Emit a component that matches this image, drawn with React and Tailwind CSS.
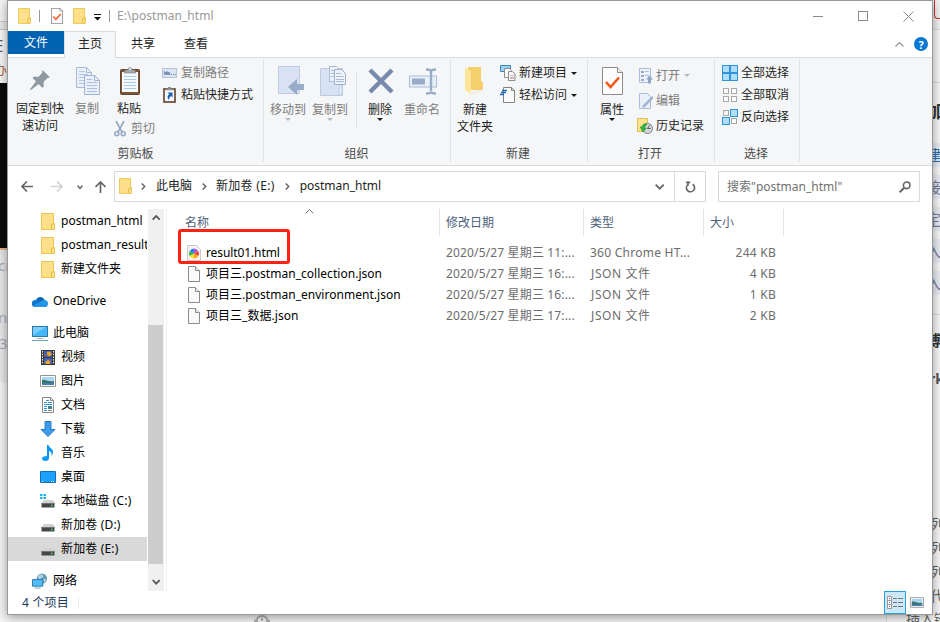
import React from "react";

const Folder = ({ w = 14, h = 17 }) => (
  <svg width={w} height={h} viewBox="0 0 14 17" className="shrink-0">
    <path d="M0.5 0.5h12v10h1v6h-13z" fill="#ffe08a" stroke="#eac54f" />
    <path d="M10.5 16.5v-5.5h3" fill="none" stroke="#e3b93c" />
  </svg>
);

const Check = ({ w, h }) => (
  <svg width={w} height={h} viewBox="0 0 21 28" className="shrink-0">
    <path d="M.5 .5h15l5 5v22H.5z" fill="#fdfdfd" stroke="#8c8c8c" strokeWidth={w < 20 ? 1.8 : 1} />
    <path d="M15.5 .5v5h5" fill="#eee" stroke="#8c8c8c" />
    <path d="M4 15l4.5 5L17 10.500" fill="none" stroke="#f4591c" strokeWidth="2.6" />
  </svg>
);

const Caret = ({ light }) => (
  <svg width="6" height="3" viewBox="0 0 6 3" className="shrink-0">
    <path d="M0 0h6L3 3z" fill={light ? "#b5b8bb" : "#1a1a1a"} />
  </svg>
);

const Pin = () => (
  <svg width="20" height="20" viewBox="0 0 20 20">
    <path d="M12.500 0l7.500 7.300-2.500.8-4 4 .3 4.200-1.500 1.400L2.500 8l1.500-1.500 4.300.4 3.700-3.900z" fill="#8d99a1" />
    <path d="M6.200 11l2.800 2.800L1 20l-1-.8z" fill="#8d99a1" />
  </svg>
);

const Copy = () => (
  <svg width="24" height="28" viewBox="0 0 24 28">
    <path d="M.5 .5h10l5 5v15H.5z" fill="#eaf0f9" stroke="#a9bbd8" />
    <path d="M10.500 .5v5h5" fill="none" stroke="#a9bbd8" />
    <path d="M3 4.500h6M3 7.500h9M3 10.500h9M3 13.500h9M3 16.500h9" stroke="#b5c6e0" />
    <path d="M8.500 8.500h10l5 5v14h-15z" fill="#eaf0f9" stroke="#a0b4d4" />
    <path d="M18.500 8.500v5h5" fill="none" stroke="#a0b4d4" />
    <path d="M11 12.500h5M11 15.500h10M11 18.500h10M11 21.500h10M11 24.500h10" stroke="#adbfdb" />
  </svg>
);

const Paste = () => (
  <svg width="20" height="29" viewBox="0 0 20 29">
    <rect x=".5" y="3.500" width="19" height="25" rx="1" fill="#7c563b" stroke="#66452e" />
    <rect x="2" y="6" width="16" height="20" fill="#f7fafd" />
    <path d="M4 10.500h12M4 13.500h12M4 16.500h12M4 19.500h12M4 22.500h12" stroke="#a9cbe6" />
    <path d="M4 7l1.500-3H8a2 2.500 0 014 0h2.500L16 7z" fill="#a5a9ad" stroke="#85898d" strokeWidth=".7" />
    <circle cx="10" cy="3" r="1" fill="#f4f5f7" />
  </svg>
);

const Scissors = () => (
  <svg width="12" height="16" viewBox="0 0 12 16" fill="none" stroke="#94a6c4">
    <path d="M2 0l6 11M10 0L4 11" strokeWidth="1.600" />
    <circle cx="2.800" cy="12.800" r="2" strokeWidth="1.500" />
    <circle cx="9.200" cy="12.800" r="2" strokeWidth="1.500" />
  </svg>
);

const PathIcon = () => (
  <svg width="15" height="10" viewBox="0 0 15 10">
    <rect x=".5" y=".5" width="14" height="9" fill="#dce6f3" stroke="#b3c3dc" />
    <path d="M2 3l1 4 1-3 1 3M5 3l1 4 1-3 1 3M9 6.500h1M11 6.500h1M13 6.500h1" fill="none" stroke="#6f88b1" />
  </svg>
);

const ShortcutPaste = () => (
  <svg width="13" height="16" viewBox="0 0 13 16" className="ml-px">
    <rect x="1" y="2" width="11" height="13" fill="#f5f9ff" stroke="#6a4b36" strokeWidth="1.700" />
    <path d="M3 2.500h7M5 .8h3" stroke="#8d9195" strokeWidth="1.600" />
    <path d="M4.500 5.500h5v5L8 9C6.500 10 6.200 11 6 13 3.800 10.500 4.500 8.500 6.300 7.300z" fill="#1c5eb0" />
  </svg>
);

const MoveTo = () => (
  <svg width="27" height="30" viewBox="0 0 27 30">
    <path d="M.5 .5h21v25l-1 2h-20z" fill="#d8e2f2" stroke="#bccbe3" />
    <path d="M19 20v7.500h2.500" fill="none" stroke="#bccbe3" />
    <path d="M10 21l9-8v5h7v6h-7v5z" fill="#98acca" />
  </svg>
);

const CopyTo = () => (
  <svg width="27" height="31" viewBox="0 0 27 31">
    <path d="M.5 2.500h22v27h-22z" fill="#d8e2f2" stroke="#bccbe3" />
    <path d="M19 22l1-3h2v10h-3z" fill="#e8eef8" stroke="#bccbe3" />
    <path d="M9.500 .5h7l3 3v12h-10z" fill="#eef3fa" stroke="#a9bbd8" />
    <path d="M14.500 3.500h7l4 4v11h-11z" fill="#eef3fa" stroke="#9fb2d2" />
    <path d="M11 4.500h3M11 7.500h3M11 10.500h3M16 7.500h5M16 10.500h8M16 13.500h8M16 15.500h8" stroke="#a9bbd8" />
  </svg>
);

const Delete = () => (
  <svg width="26" height="26" viewBox="0 0 26 26">
    <path d="M2 2l22 22M24 2L2 24" stroke="#768aae" strokeWidth="4.400" />
  </svg>
);

const Rename = () => (
  <svg width="28" height="27" viewBox="0 0 28 27">
    <rect x=".5" y="8" width="27" height="11" fill="#e9f0fa" stroke="#aabddb" />
    <rect x="3" y="10.500" width="13" height="6" fill="#98acca" />
    <path d="M17 1.500c3 0 5 .5 5 2 0-1.500 2-2 5-2M22 3v20M17 25.500c3 0 5-.5 5-2 0 1.500 2 2 5 2" fill="none" stroke="#98acca" strokeWidth="2.400" />
  </svg>
);

const NewFolder = () => (
  <svg width="20" height="28" viewBox="0 0 20 28">
    <path d="M3 0h13v14l2 1v8H5z" fill="#f5cf6b" />
    <path d="M0 0l6 5v22L0 23z" fill="#ffe597" />
    <path d="M6 27l11-4" stroke="#e4e4e4" />
  </svg>
);

const NewItem = () => (
  <svg width="16" height="16" viewBox="0 0 16 16">
    <path d="M.5 .5h10v6H.5z" fill="#9ed2f0" stroke="#3c87b6" />
    <path d="M4.500 3.500h5l2 2v7h-7z" fill="#fafafa" stroke="#8c8c8c" />
    <path d="M8.500 6.500h4l2.500 2.500v6.500H8.500z" fill="#fafafa" stroke="#8c8c8c" />
    <path d="M10 10.500h4M10 13.500h4" stroke="#f0aaa8" />
    <path d="M10 12.500h4" stroke="#a8bce6" />
  </svg>
);

const EasyAccess = () => (
  <svg width="15" height="16" viewBox="0 0 15 16">
    <path d="M3.500 .5h8l3 3v12h-11z" fill="#fafafa" stroke="#858585" />
    <path d="M11.500 .5v3h3" fill="none" stroke="#858585" />
    <path d="M2 3.500h5M1 5.500h5M0 7.500h4" stroke="#246cb2" strokeWidth="1.300" />
  </svg>
);

const OpenIcon = () => (
  <svg width="14" height="16" viewBox="0 0 14 16" className="ml-[2px]">
    <path d="M.5 .5h11v14H.5z" fill="#eef3fa" stroke="#aabddb" />
    <path d="M2 3h3v2H2zM2 7h3v2H2zM2 11h3v2H2z" fill="#98acca" />
    <path d="M6 3.500h4M6 7.500h4" stroke="#aabddb" />
    <path d="M10.500 7.500l3.500 4h-2v4H9v-4H7z" fill="#8fa4c6" />
  </svg>
);

const Edit = () => (
  <svg width="14" height="16" viewBox="0 0 14 16" className="ml-[2px]">
    <path d="M.5 .5h8l3 3v12H.5z" fill="#e9f0fa" stroke="#aabddb" />
    <path d="M14 4L6 12l-2 2" stroke="#a3b5d1" strokeWidth="2.500" />
  </svg>
);

const History = () => (
  <svg width="16" height="16" viewBox="0 0 16 16">
    <path d="M.5 .5h10v13H.5z" fill="#ffe38e" stroke="#dfbd55" />
    <circle cx="10.500" cy="10.500" r="5" fill="#d5d8da" stroke="#7c8083" />
    <path d="M10.500 10.500l2-3M10.500 10.500h3" stroke="#55595c" />
    <path d="M9 5.500C6 6 5 8 5 9H3l3 5 3.500-4H7.500c0-1 .5-2 2-2.500z" fill="#2eb33f" stroke="#1d8d2d" strokeWidth=".5" />
  </svg>
);

// on: which of the four cells are highlighted
const Cells = ({ on }) => (
  <svg width="16" height="16" viewBox="0 0 16 16">
    {[0, 1, 2, 3].map((i) => {
      const x = (i % 2) * 8;
      const y = i > 1 ? 8 : 0;
      return on.includes(i) ? (
        <rect key={i} x={x + 0.5} y={y + 0.5} width="7" height="7" fill="#b0defa" stroke="#2e95dd" />
      ) : (
        <rect key={i} x={x + 1.5} y={y + 1.5} width="5" height="5" fill="#fafafa" stroke="#a9a9a9" />
      );
    })}
  </svg>
);

const Cloud = () => (
  <svg width="16" height="11" viewBox="0 0 16 11">
    <path d="M4 4a4.500 4.500 0 018-1l1 1.500L7 8z" fill="#0a64b4" />
    <path d="M3.500 4C5 3.500 6.500 4 8 5l7 5-1 1H3A3.500 3.500 0 013.500 4z" fill="#1179d0" />
    <path d="M8 6l3-1.800c3-.8 5 .8 5 3.300 0 2-1 3.500-3 3.500H3c-1.500 0-2-1-2-1z" fill="#2594e6" />
  </svg>
);

const Computer = () => (
  <svg width="16" height="15" viewBox="0 0 16 15">
    <rect x=".5" y=".5" width="15" height="10" fill="#46b7f8" stroke="#287bac" />
    <path d="M1 1h13L1 9z" fill="#7bcefc" />
    <path d="M5 12.500h6" stroke="#a2b6c3" />
    <path d="M0 14.500h16" stroke="#7fa3b9" />
  </svg>
);

const Video = () => (
  <svg width="14" height="15" viewBox="0 0 14 15">
    <path d="M0 0h14v15H0z" fill="#3a3a3a" />
    <path d="M1.500 1v13M12.500 1v13" stroke="#eee" strokeDasharray="1.500 1.200" />
    <path d="M3 1h8v6H3zM3 8h8v6H3z" fill="#3d64b8" />
    <path d="M6 2l3-.5 2 3-3 2-2-2zM4 12l3-2 2 1v3H5z" fill="#e9a52e" />
    <path d="M3 5l3 1M8 9l2 2" stroke="#cf4535" />
  </svg>
);

const Picture = ({ w = 16, h = 12 }) => (
  <svg width={w} height={h} viewBox="0 0 16 12">
    <path d="M.5 .5h15v11H.5z" fill="#fff" stroke="#939393" />
    <path d="M2 2h12v4H2z" fill="#a8d6f5" />
    <path d="M2 5c3-1 5 2 12 1v4H2z" fill="#36766c" />
    <path d="M2 8.500c4-1 8 0 12-1V10H2z" fill="#4b7cab" />
  </svg>
);

const Document = () => (
  <svg width="12" height="16" viewBox="0 0 12 16">
    <path d="M.5 .5h8l3 3v12H.5z" fill="#fff" stroke="#8a8a8a" />
    <path d="M8.500 .5v3h3" fill="none" stroke="#8a8a8a" />
    <path d="M4 3.500h3M2 5.500h3M6 5.500h4M2 7.500h8M2 9.500h3M2 11.500h3M2 13.500h3" stroke="#3691d2" />
    <path d="M6 9h4v3H6z" fill="#477f82" />
    <path d="M6 13.500h4" stroke="#888" />
  </svg>
);

const Download = () => (
  <svg width="16" height="16" viewBox="0 0 16 16">
    <path d="M5 .5h6v8h4L8 15.500 1 8.500h4z" fill="#3c9bea" stroke="#2b7cc4" />
  </svg>
);

const Music = () => (
  <svg width="12" height="16" viewBox="0 0 12 16">
    <path d="M5 0h1.500c.5 3 4.500 3.500 4.500 7 0 2-.7 3-1.500 4 .6-3-.5-4-2.500-5v7c0 2-1.500 3-3.500 3S0 15 0 13.500 2 11 5 11z" fill="#0b98f2" />
  </svg>
);

const Desktop = () => (
  <svg width="16" height="12" viewBox="0 0 16 12">
    <path d="M.5 .5h15v11H.5z" fill="#1ba0fb" stroke="#106fb4" />
    <path d="M2 10.500h1M11 10.500h1M13 10.500h1" stroke="#fff" />
  </svg>
);

const Drive = ({ win }) => (
  <svg width="16" height="16" viewBox="0 0 16 16">
    <path d="M4 7h9l2 3H2z" fill="#cfd1d3" />
    <path d="M1.500 10h13v4.500h-13z" fill="#45484a" />
    <path d="M1.500 10.500h13" stroke="#707375" />
    <path d="M11 12.500h1.500" stroke="#52e05e" strokeWidth="1.300" />
    {win && <path d="M0 1h2.500v2H0zM3.500 1H6v2H3.500zM0 4h2.500v2H0zM3.500 4H6v2H3.500z" fill="#18b4ef" />}
  </svg>
);

const Network = () => (
  <svg width="17" height="16" viewBox="0 0 17 16">
    <circle cx="10.500" cy="5.500" r="5.500" fill="#6399b8" />
    <path d="M6 3c3-3 6-2 6 0s-4 2-4 4M12 6c2-1 3 0 3 1l-2 3z" fill="#b2d5e4" />
    <path d="M.5 6.500h11v7H.5z" fill="#54bcfa" stroke="#2478a8" />
    <path d="M3 15.500h6" stroke="#7ba0b7" />
  </svg>
);

const FileIcon = () => (
  <svg width="12" height="16" viewBox="0 0 12 16">
    <path d="M.5 .5h7l4 4v11H.5z" fill="#fafafa" stroke="#8b8b8b" />
    <path d="M7.500 .5v4h4" fill="#eee" stroke="#8b8b8b" />
  </svg>
);

const HtmlIcon = () => (
  <svg width="14" height="16" viewBox="0 0 14 16">
    <path d="M.5 .5h9l4 4v11H.5z" fill="#f3f3f3" stroke="#c9c9c9" />
    <path d="M7 8.500V3.500A5 5 0 0111.300 6z" fill="#b357d8" />
    <path d="M7 8.500L11.300 6a5 5 0 010 5z" fill="#f14335" />
    <path d="M7 8.500l4.300 2.500A5 5 0 017 13.500z" fill="#f9a51a" />
    <path d="M7 8.500v5A5 5 0 012.700 11z" fill="#f6e12a" />
    <path d="M7 8.500L2.700 11a5 5 0 010-5z" fill="#37b34a" />
    <path d="M7 8.500L2.700 6A5 5 0 017 3.500z" fill="#2b7de9" />
  </svg>
);

const Chevron = ({ d, w, h, color = "#666", sw = 1.5 }) => (
  <svg width={w} height={h} viewBox={`0 0 ${w} ${h}`} className="shrink-0">
    <path d={d} fill="none" stroke={color} strokeWidth={sw} />
  </svg>
);

const Big = ({ icon, lines, className, dim, caret }) => (
  <div className={`flex shrink-0 flex-col items-center ${className}`}>
    <div className="flex h-[34px] items-center">{icon}</div>
    <div className={`mt-[3px] text-center leading-[17px] ${dim ? "text-[#7d7d7d]" : "text-[#1e1e1e]"}`}>
      {lines.map((l) => (
        <div key={l}>{l}</div>
      ))}
    </div>
    {caret && <Caret light={dim} />}
  </div>
);

const Small = ({ icon, label, dim, caret, className = "h-[22px]" }) => (
  <div className={`flex items-center ${className} ${dim ? "text-[#7d7d7d]" : "text-[#1e1e1e]"}`}>
    <div className="flex w-[19px] shrink-0 items-center">{icon}</div>
    <span>{label}</span>
    {caret && <div className="ml-[4px]"><Caret light={dim} /></div>}
  </div>
);

const Group = ({ label, className, children }) => (
  <div className={`mt-[2px] flex h-[102px] shrink-0 flex-col border-r border-[#dfe1e4] ${className}`}>
    <div className="flex h-[85px]">{children}</div>
    <div className="text-center leading-[17px] text-[#4a4a4a]">{label}</div>
  </div>
);

const tree = [
  { label: "postman_html", icon: <Folder />, sub: true },
  { label: "postman_result", icon: <Folder />, sub: true },
  { label: "新建文件夹", icon: <Folder />, sub: true },
  { label: "OneDrive", icon: <Cloud />, gap: true },
  { label: "此电脑", icon: <Computer />, gap: true },
  { label: "视频", icon: <Video />, sub: true },
  { label: "图片", icon: <Picture />, sub: true },
  { label: "文档", icon: <Document />, sub: true },
  { label: "下载", icon: <Download />, sub: true },
  { label: "音乐", icon: <Music />, sub: true },
  { label: "桌面", icon: <Desktop />, sub: true },
  { label: "本地磁盘 (C:)", icon: <Drive win />, sub: true, wide: true },
  { label: "新加卷 (D:)", icon: <Drive />, sub: true, wide: true },
  { label: "新加卷 (E:)", icon: <Drive />, sub: true, wide: true, active: true },
  { label: "网络", icon: <Network />, gap: true },
];

const files = [
  { name: "result01.html", date: "2020/5/27 星期三 11:...", type: "360 Chrome HT...", size: "244 KB", html: true },
  { name: "项目三.postman_collection.json", date: "2020/5/27 星期三 16:...", type: "JSON 文件", size: "4 KB" },
  { name: "项目三.postman_environment.json", date: "2020/5/27 星期三 16:...", type: "JSON 文件", size: "1 KB" },
  { name: "项目三_数据.json", date: "2020/5/27 星期三 17:...", type: "JSON 文件", size: "2 KB" },
];

const TitleBar = () => (
  <div className="flex h-[30px] items-center pl-[10px]">
    <Folder w={13} h={16} />
    <div className="ml-[8px] h-[12px] w-px bg-[#999]" />
    <div className="ml-[11px]"><Check w={12} h={16} /></div>
    <div className="ml-[10px]"><Folder w={13} h={16} /></div>
    <svg width="7" height="7" viewBox="0 0 7 7" className="ml-[8px] mt-[3px]">
      <path d="M0 .5h7" stroke="#111" />
      <path d="M0 3h7L3.500 6.500z" fill="#111" />
    </svg>
    <div className="ml-[8px] h-[12px] w-px bg-[#999]" />
    <span className="ml-[7px] tracking-[0.05px] text-[#999]">E:\postman_html</span>
    <div className="ml-auto mr-[18px] flex items-center gap-[35px]">
      <div className="h-px w-[10px] bg-[#888]" />
      <div className="h-[10px] w-[10px] border border-[#888]" />
      <Chevron d="M.5 .5l10 10M10.500 .5l-10 10" w={11} h={11} color="#888" sw={1} />
    </div>
  </div>
);

const Tabs = () => (
  <div className="flex h-[26px] text-[#222]">
    <div className="flex h-[23px] w-[56px] items-center justify-center bg-[#0063b1] pt-px text-white">文件</div>
    <div className="z-10 flex h-[27px] w-[52px] justify-center border border-b-0 border-[#dadbdc] bg-[#f5f6f7] pt-[3px] leading-[18px]">主页</div>
    <div className="ml-[15px] pt-[4px] leading-[18px]">共享</div>
    <div className="ml-[29px] pt-[4px] leading-[18px]">查看</div>
    <div className="ml-auto mr-[4px] flex items-center">
      <Chevron d="M.5 4.500l4-4 4 4" w={9} h={5} color="#999" sw={1.3} />
      <div className="ml-[10px] flex h-[14px] w-[14px] items-center justify-center rounded-full bg-[#0878d4] text-[11px] font-bold leading-none text-white">?</div>
    </div>
  </div>
);

const Ribbon = () => (
  <div className="flex h-[109px] border-y border-[#dadbdc] bg-[#f5f6f7]">
    <Group label="剪贴板" className="w-[256px]">
      <Big className="ml-[4px] w-[56px] pt-[3px]" icon={<Pin />} lines={["固定到快", "速访问"]} />
      <Big className="w-[38px] pt-[3px]" icon={<div className="ml-[2px] mt-px"><Copy /></div>} lines={["复制"]} dim />
      <div className="flex w-[56px] flex-col pt-[3px]">
        <Big className="w-[46px]" icon={<div className="ml-[2px]"><Paste /></div>} lines={["粘贴"]} />
        <div className="ml-[8px] mt-[2px] flex h-[20px] items-center gap-[5px] text-[#7d7d7d]">
          <Scissors />
          <span>剪切</span>
        </div>
      </div>
      <div className="pt-[2px]">
        <Small icon={<PathIcon />} label="复制路径" dim />
        <Small icon={<ShortcutPaste />} label="粘贴快捷方式" />
      </div>
    </Group>
    <Group label="组织" className="w-[187px] pr-px">
      <Big className="ml-[3px] w-[42px] pt-[4px]" icon={<div className="ml-[6px]"><MoveTo /></div>} lines={["移动到"]} dim caret />
      <Big className="w-[42px] pt-[4px]" icon={<div className="ml-[7px]"><CopyTo /></div>} lines={["复制到"]} dim caret />
      <div className="ml-[5px] mt-[13px] h-[55px] w-px bg-[#dfe1e4]" />
      <Big className="ml-[2px] w-[42px] pt-[4px]" icon={<div className="ml-[2px]"><Delete /></div>} lines={["删除"]} caret />
      <Big className="w-[42px] pt-[4px]" icon={<div className="ml-px"><Rename /></div>} lines={["重命名"]} dim />
    </Group>
    <Group label="新建" className="w-[137px] pr-[2px]">
      <Big className="ml-[3px] w-[42px] pt-[4px]" icon={<NewFolder />} lines={["新建", "文件夹"]} />
      <div className="ml-[4px] pt-[2px]">
        <Small icon={<NewItem />} label="新建项目" caret />
        <Small icon={<EasyAccess />} label="轻松访问" caret />
      </div>
    </Group>
    <Group label="打开" className="w-[127px] pr-[2px]">
      <Big className="ml-[3px] w-[42px] pt-[4px]" icon={<div className="ml-px"><Check w={21} h={28} /></div>} lines={["属性"]} caret />
      <div className="ml-[4px] pt-[2px]">
        <Small icon={<OpenIcon />} label="打开" dim caret className="h-[27px]" />
        <Small icon={<Edit />} label="编辑" dim className="h-[24px]" />
        <Small icon={<History />} label="历史记录" className="h-[26px]" />
      </div>
    </Group>
    <Group label="选择" className="w-[85px] pr-[2px]">
      <div className="ml-[7px] pt-[2px]">
        <Small icon={<Cells on={[0, 1, 2, 3]} />} label="全部选择" />
        <Small icon={<Cells on={[]} />} label="全部取消" />
        <Small icon={<Cells on={[1, 2]} />} label="反向选择" />
      </div>
    </Group>
  </div>
);

const Sep = () => <Chevron d="M.7 .5l3 3-3 3" w={5} h={7} />;

const AddressBar = () => (
  <div className="mt-[5px] flex h-[31px] items-center text-[#222]">
    <div className="flex w-[106px] items-center pl-[13px]">
      <Chevron d="M12 5.500H1M6 .5l-5 5 5 5" w={12} h={11} color="#666" sw={1.6} />
      <div className="ml-[18px]"><Chevron d="M0 5.500h11M6 .5l5 5-5 5" w={12} h={11} color="#d3d3d3" sw={1.6} /></div>
      <div className="ml-[14px]"><Chevron d="M.5 .5l2.500 3 2.500-3" w={6} h={4} /></div>
      <div className="ml-[12px]"><Chevron d="M5.500 12V1M.5 6l5-5 5 5" w={11} h={12} color="#666" sw={1.7} /></div>
    </div>
    <div className="flex h-[31px] w-[592px] items-center border border-[#d9d9d9] pb-px">
      <div className="ml-[4px]"><Folder w={13} h={16} /></div>
      <div className="ml-[9px]"><Sep /></div>
      <span className="ml-[10px]">此电脑</span>
      <div className="ml-[10px]"><Sep /></div>
      <span className="ml-[9px] tracking-[0.3px]">新加卷 (E:)</span>
      <div className="ml-[10px]"><Sep /></div>
      <span className="ml-[10px]">postman_html</span>
      <div className="ml-auto mr-[10px] mt-px"><Chevron d="M.7 .7l4 4 4-4" w={9} h={6} sw={1.8} /></div>
      <div className="-mb-px flex h-[29px] w-[31px] items-center justify-center border-l border-[#d9d9d9]">
        <svg width="11" height="12" viewBox="0 0 11 12" fill="none" stroke="#666" strokeWidth="1.600">
          <path d="M7.600 3.200a4.100 4.100 0 11-5 .6M1.800 1.200h.2M3 .9v3.800M1 1.400h4.300" />
        </svg>
      </div>
    </div>
    <div className="ml-[12px] flex h-[31px] w-[202px] items-center border border-[#d9d9d9] pl-[8px] text-[#707070]">
      <span>搜索"postman_html"</span>
      <svg width="12" height="12" viewBox="0 0 12 12" fill="none" stroke="#666" className="ml-auto mr-[8px]">
        <circle cx="7.700" cy="4.300" r="3.300" strokeWidth="1.600" />
        <path d="M5.200 6.800L.7 11.300" strokeWidth="2" />
      </svg>
    </div>
  </div>
);

const Sidebar = () => (
  <div className="w-[139px] overflow-hidden text-black">
    {tree.map((t) => (
      <div
        key={t.label}
        className={`flex h-[24px] items-center whitespace-nowrap ${t.gap ? "mt-[8px]" : ""} ${t.sub ? "pl-[32px]" : "pl-[24px]"} ${t.active ? "bg-[#d9d9d9]" : ""}`}
      >
        <div className="mr-[5px] flex w-[16px] shrink-0 justify-center">{t.icon}</div>
        <span className={t.wide ? "tracking-[0.15px]" : ""}>{t.label}</span>
      </div>
    ))}
  </div>
);

const Scrollbar = () => (
  <div className="ml-px flex h-[382px] w-[16px] flex-col items-center bg-[#f0f0f0] pr-px">
    <div className="flex h-[17px] items-center"><Chevron d="M.7 4.700l3.500-3.700 3.500 3.700" w={8} h={6} color="#555" sw={1.8} /></div>
    <div className="mt-[99px] h-[239px] w-[15px] self-start bg-[#cdcdcd]" />
    <div className="flex grow items-center pt-[9px]"><Chevron d="M.7 1l3.500 3.700L7.700 1" w={8} h={6} color="#555" sw={1.8} /></div>
  </div>
);

const FileList = () => (
  <div className="ml-[2px] border-l border-[#f0f0f0]">
    <div className="relative flex h-[27px] leading-[27px] text-[#4c607a]">
      <div className="w-[273px] border-r border-[#e5e5e5] pl-[18px]">名称</div>
      <div className="w-[144px] border-r border-[#e5e5e5] pl-[6px]">修改日期</div>
      <div className="w-[120px] border-r border-[#e5e5e5] pl-[6px]">类型</div>
      <div className="w-[80px] border-r border-[#e5e5e5] pl-[6px]">大小</div>
      <div className="absolute left-[138px] top-0 flex"><Chevron d="M.5 4.500l4-4 4 4" w={9} h={5} color="#777" sw={1} /></div>
    </div>
    <div className="relative pt-[6px]">
      {files.map((f) => (
        <div key={f.name} className="flex h-[21px] items-center whitespace-nowrap text-[#6d6d6d]">
          <div className="flex w-[279px] items-center pl-[20px] text-black">
            <div className="flex w-[19px]">{f.html ? <HtmlIcon /> : <div className="ml-px"><FileIcon /></div>}</div>
            <span className={f.html ? "tracking-[-0.1px]" : "tracking-[0.03px]"}>{f.name}</span>
          </div>
          <div className="w-[144px] tracking-[0.15px]">{f.date}</div>
          <div className={f.html ? "w-[120px] tracking-[0.25px]" : "w-[120px] pl-px tracking-[0.6px]"}>{f.type}</div>
          <div className="w-[66px] text-right tracking-[0.25px]">{f.size}</div>
        </div>
      ))}
      {/* marker round the report file */}
      <div className="absolute left-[11px] top-[-7px] h-[35px] w-[112px] rounded-[3px] border-[3px] border-[#ff2114]" />
    </div>
  </div>
);

const StatusBar = () => (
  <div className="flex h-[23px] items-center text-[#1e395b]">
    <span className="ml-[14px] tracking-[0.2px]">4 个项目</span>
    <div className="ml-[9px] h-[12px] w-px bg-[#eee]" />
    <div className="ml-auto mr-[8px] flex items-center">
      <div className="flex h-[23px] w-[22px] items-center justify-center border border-[#26a0da] bg-[#cce8f6]">
        <svg width="16" height="13" viewBox="0 0 16 13">
          <path d="M.5 .5h4v12h-4zM.5 4.500h4M.5 8.500h4" fill="#fff" stroke="#999" />
          <path d="M2 2.500h1M2 10.500h1" stroke="#c33" />
          <path d="M2 6.500h1" stroke="#38c" />
          <path d="M6 2.500h4M11 2.500h5M6 6.500h4M11 6.500h5M6 10.500h4M11 10.500h5" stroke="#777" />
        </svg>
      </div>
      <div className="ml-[4px]"><Picture w={14} h={11} /></div>
    </div>
  </div>
);

// the web page that shows round the window edges
const Backdrop = () => (
  <div className="flex h-full justify-between">
    <div className="flex w-[60px] flex-col overflow-hidden whitespace-nowrap">
      <div className="h-[22px] border-b border-[#ccc] bg-[#f5f5f5]" />
      <div className="h-[8px] border-b border-[#ccc] bg-[#eaeaea]" />
      <div className="h-[53px] bg-[#f8f8f8] text-[17px]">
        <div className="-ml-[6px] pt-[6px] leading-[20px] text-[#555a70]">E</div>
        <div className="-ml-[6px] pt-[4px] text-[13px] leading-[18px] text-[#b06b3c]">办</div>
      </div>
      <div className="h-[165px] bg-[#0a0a0a]" />
      <div className="h-[2px] bg-[#e9b18d]" />
      <div className="h-[132px] bg-[#e9e9e9] text-[15px] leading-[26px] text-[#a9acb8]">
        <div className="-ml-[2px] pt-[2px]">cr</div>
        <div className="-ml-[2px] pt-[26px]">na</div>
        <div className="-ml-px">3</div>
      </div>
      <div className="grow bg-[#f5f5f5]" />
    </div>
    <div className="flex grow items-end bg-[#f5f5f5]">
      <div className="ml-[194px] h-[8px] w-[400px] overflow-hidden">
        <svg width="16" height="16" viewBox="0 0 16 16" fill="none" stroke="#b0b0b0" strokeWidth="2">
          <circle cx="8" cy="8" r="6" />
          <path d="M8 4v3M0 7h4M12 7h4" />
        </svg>
      </div>
    </div>
    <div className="flex w-[54px] flex-col overflow-hidden whitespace-nowrap border-l border-[#ddd] bg-[#f8f8f8] text-[#7a7f9c] [&>*]:shrink-0">
      <div className="h-[30px] border-b border-[#ddd] bg-[#f3f3f3] pl-[47px]">
        <div className="h-[19px] w-[12px] rounded-bl-[4px] border-b border-l border-[#c33]" />
      </div>
      <div className="h-[53px] border-b border-[#ddd]" />
      <div className="h-[60px] pl-[40px] pt-[16px] text-[18px] font-bold leading-[24px] text-[#333]">加</div>
      <div className="flex flex-col gap-[8px] pl-[39px] text-[15px] leading-[24px]">
        <div className="bg-[#e9ecf2] text-[#2b6fae]">建</div>
        <div className="bg-[#e9ecf2]">接</div>
        <div className="bg-[#e9ecf2]">定</div>
        <div className="bg-[#e9ecf2]">入</div>
        <div className="bg-[#e9ecf2]">入</div>
      </div>
      <div className="mt-[19px] border-t border-[#ddd] pl-[39px] pt-[13px] text-[15px] font-bold leading-[24px] text-[#333]">博</div>
      <div className="pl-[42px] pt-[15px] text-[14px] font-bold leading-[24px] text-[#555]">rk</div>
      <div className="mt-[121px] pl-[43px] text-[14px] leading-[24px] text-[#666]">
        <div>列</div>
        <div>列</div>
        <div>列</div>
        <div>代</div>
      </div>
      <div className="pl-[19px] text-[14px] leading-[22px] text-[#666]">插入链</div>
    </div>
  </div>
);

export default function App() {
  return (
    <div className="relative h-[622px] w-[940px] overflow-hidden font-['Noto_Sans','Noto_Sans_CJK_SC',sans-serif] text-[12px] leading-[18px]">
      <Backdrop />
      <div className="absolute left-[7px] top-0 h-[615px] w-[926px] border border-[#999] bg-white shadow-[0_2px_10px_rgba(0,0,0,0.4)]">
        <TitleBar />
        <Tabs />
        <Ribbon />
        <AddressBar />
        <div className="mt-[7px] flex h-[382px]">
          <Sidebar />
          <Scrollbar />
          <FileList />
        </div>
        <StatusBar />
      </div>
    </div>
  );
}
